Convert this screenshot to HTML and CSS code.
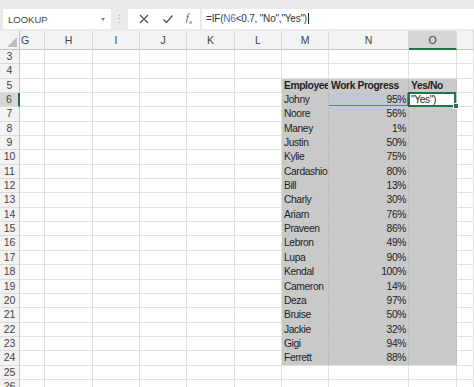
FILE: index.html
```html
<!DOCTYPE html>
<html lang="en">
	<head>
		<meta charset="UTF-8" />
		<title>Work Progress</title>
		<link rel="stylesheet" href="styles.css">
	</head>
	<body>
		<div class="toolbar">
			<div class="name-box">
				<span>LOOKUP</span>
				<span class="drop"></span>
			</div>
			<div class="grip">&#8942;</div>
			<div class="fx-buttons">
				<svg width="12" height="12" viewBox="0 0 12 12"><path d="M2 2 L10 10 M10 2 L2 10" stroke="#555" stroke-width="1.3" fill="none"/></svg>
				<svg width="12" height="12" viewBox="0 0 12 12"><path d="M1.5 6.5 L4.5 9.5 L10.5 2.5" stroke="#555" stroke-width="1.3" fill="none"/></svg>
				<span class="fx"><i>f</i><sub>x</sub></span>
			</div>
			<div class="formula">=IF(<span class="ref-txt">N6</span>&lt;0.7, "No","Yes")<span class="caret"></span></div>
		</div>
		<div class="sheet" id="sheet"></div>
		<script src="script.js"></script>
	</body>
</html>
```

FILE: styles.css
```css
body {
	margin: 0;
	background: #fff;
	font-family: "Liberation Sans", Arial, sans-serif;
	overflow: hidden;
	height: 387px;
}

.toolbar {
	display: flex;
	align-items: center;
	height: 31px;
	padding: 9px 0 2px 3px;
	box-sizing: border-box;
	background: #eaeaea;
}

.name-box {
	display: flex;
	align-items: center;
	justify-content: space-between;
	width: 108px;
	height: 20px;
	padding: 0 6px 0 5px;
	box-sizing: border-box;
	background: #fff;
	font-size: 9.5px;
	color: #444;
}

.drop {
	border-left: 2.5px solid transparent;
	border-right: 2.5px solid transparent;
	border-top: 3px solid #777;
}

.grip {
	width: 17px;
	text-align: center;
	color: #aaa;
	font-size: 11px;
}

.fx-buttons {
	display: flex;
	align-items: center;
	justify-content: space-around;
	width: 72px;
	height: 20px;
	padding: 0 2px 0 4px;
	box-sizing: border-box;
	background: #fff;
}

.fx {
	font-family: "Liberation Serif", serif;
	font-size: 11px;
	color: #555;
}

.fx sub {
	font-size: 7px;
	font-style: italic;
}

.formula {
	flex: 1;
	height: 20px;
	margin-left: 2px;
	padding-left: 4px;
	line-height: 20px;
	background: #fff;
	font-size: 10px;
	letter-spacing: -0.2px;
	color: #333;
}

.ref-txt {
	color: #3c6fc4;
}

.caret {
	display: inline-block;
	width: 1px;
	height: 11px;
	margin-left: 1px;
	vertical-align: -2px;
	background: #222;
}

.sheet {
	display: grid;
	grid-template-columns: 20px 25px 48px 47px 47px 48px 47px 47px 80px 48px 1fr;
	grid-template-rows: 19px;
	grid-auto-rows: 14.35px;
	font-size: 10.3px;
	letter-spacing: -0.4px;
	color: #1e1e1e;
}

.sheet > div {
	box-sizing: border-box;
	border-right: 1px solid #e1e1e1;
	border-bottom: 1px solid #e1e1e1;
	line-height: 13px;
	padding: 0 2px 0 2px;
	white-space: nowrap;
	overflow: hidden;
}

.sheet .col-head {
	background: #f3f3f3;
	border-right-color: #d9d9d9;
	border-bottom-color: #c4c4c4;
	text-align: center;
	line-height: 18px;
	color: #444;
	letter-spacing: 0;
	font-size: 10.5px;
}

.sheet .col-head.first {
	text-align: left;
	padding-left: 1px;
}

.sheet .corner {
	position: relative;
	background: #f3f3f3;
	border-right-color: #c4c4c4;
	border-bottom-color: #c4c4c4;
}

.corner::after {
	content: "";
	position: absolute;
	right: 2px;
	bottom: 2px;
	border-left: 10px solid transparent;
	border-bottom: 10px solid #bdbdbd;
}

.sheet .row-head {
	background: #f3f3f3;
	border-right-color: #c4c4c4;
	border-bottom-color: #dcdcdc;
	text-align: center;
	color: #444;
	letter-spacing: 0;
	font-size: 10.5px;
}

.sheet .col-head.sel {
	background: #d6d6d6;
	border-bottom: 2px solid #217346;
}

.sheet .row-head.sel {
	background: #d6d6d6;
	border-right: 2px solid #217346;
}

.sheet .tbl {
	background: #c9c9c9;
	border-right-color: #bcbcbc;
	border-bottom-color: #c9c9c9;
}

.sheet .tbl.last {
	border-bottom-color: #e1e1e1;
}

.sheet .th {
	font-weight: bold;
}

.sheet .num {
	text-align: right;
}

.sheet .ref {
	position: relative;
	background: #c2c7d3;
}

.ref::after {
	content: "";
	position: absolute;
	inset: -1px 0 0 -1px;
	border: 1px solid #4a7ec9;
}

.sheet .active {
	position: relative;
	background: #fff;
	overflow: visible;
}

.active::before {
	content: "";
	position: absolute;
	inset: -1px 0 -1px -1px;
	border: 2px solid #217346;
}

.active::after {
	content: "";
	position: absolute;
	right: -3px;
	bottom: -3px;
	width: 4px;
	height: 4px;
	background: #217346;
	border: 1px solid #fff;
}
```

FILE: script.js
```javascript
var cols = ["G", "H", "I", "J", "K", "L", "M", "N", "O", ""];
var people = [
	["Johny", "95%"], ["Noore", "56%"], ["Maney", "1%"], ["Justin", "50%"],
	["Kylie", "75%"], ["Cardashio", "80%"], ["Bill", "13%"], ["Charly", "30%"],
	["Ariarn", "76%"], ["Praveen", "86%"], ["Lebron", "49%"], ["Lupa", "90%"],
	["Kendal", "100%"], ["Cameron", "14%"], ["Deza", "97%"], ["Bruise", "50%"],
	["Jackie", "32%"], ["Gigi", "94%"], ["Ferrett", "88%"]
];
var sheet = document.getElementById("sheet");

function cell(cls, text) {
	var d = document.createElement("div");
	if (cls) d.className = cls;
	if (text) d.textContent = text;
	sheet.appendChild(d);
	return d;
}

cell("corner");
for (var c = 0; c < cols.length; c++) {
	var cls = "col-head";
	if (c === 0) cls += " first";
	if (cols[c] === "O") cls += " sel";
	cell(cls, cols[c]);
}

for (var r = 3; r <= 26; r++) {
	cell(r === 6 ? "row-head sel" : "row-head", String(r));
	for (var c = 0; c < cols.length; c++) {
		var col = cols[c];
		var inTable = r >= 5 && r <= 24 && (col === "M" || col === "N" || col === "O");
		if (!inTable) {
			cell("");
			continue;
		}
		var cls = "tbl";
		if (r === 24) cls += " last";
		var text = "";
		if (r === 5) {
			cls += " th";
			text = { M: "Employee", N: "Work Progress", O: "Yes/No" }[col];
		} else {
			var p = people[r - 6];
			if (col === "M") text = p[0];
			if (col === "N") { text = p[1]; cls += " num"; }
		}
		if (r === 6 && col === "N") cls += " ref";
		if (r === 6 && col === "O") { cls += " active"; text = "\"Yes\")"; }
		cell(cls, text);
	}
}
```
